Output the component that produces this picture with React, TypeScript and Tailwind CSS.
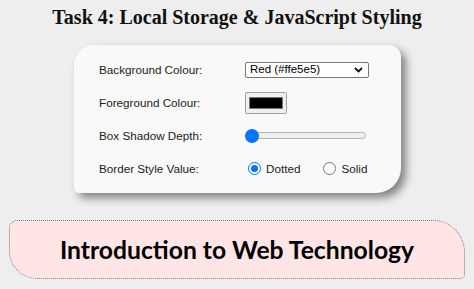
import React from "react";

export default function App() {
  return (
    <div className="w-[474px] h-[289px] bg-[#eeeeee] overflow-hidden pt-[5px]" style={{ fontFamily: '"Liberation Sans", Arial, sans-serif' }}>
      <h2 className="text-center font-bold text-[20px] leading-[24px] text-[#111]" style={{ fontFamily: '"Liberation Serif", "Times New Roman", serif' }}>
        Task 4: Local Storage &amp; JavaScript Styling
      </h2>
      <div className="mt-[16px] ml-[74px] w-[327px] h-[148px] bg-[#f9f9f9] rounded-tl-[20px] rounded-tr-[12px] rounded-br-[25px] rounded-bl-[5px] shadow-[5px_5px_9px_rgba(0,0,0,0.45)] pl-[25px] py-[8px]">
        <div className="grid grid-cols-[146px_auto] auto-rows-[33px] items-center text-[11.7px] text-[#222]">
          <div>Background Colour:</div>
          <div className="relative w-[124px] h-[16px] border border-[#767676] rounded-[2px] bg-white flex items-center pl-[4px] text-[11.5px] text-black">
            Red (#ffe5e5)
            <svg className="absolute right-[5px] top-[4px]" width="9" height="6" viewBox="0 0 9 6">
              <path d="M1 1 L4.5 4.5 L8 1" fill="none" stroke="#111" strokeWidth="1.8" />
            </svg>
          </div>
          <div>Foreground Colour:</div>
          <div className="w-[42px] h-[22px] border border-[#a0a0a0] rounded-[2px] bg-[#efefef] flex items-center justify-center">
            <div className="w-[34px] h-[12px] bg-black border border-[#777]" />
          </div>
          <div>Box Shadow Depth:</div>
          <div className="relative w-[121px] h-[14px] flex items-center">
            <div className="w-full h-[7px] rounded-full bg-[#efefef] border border-[#b5b5b5]" />
            <div className="absolute left-[0px] top-[0px] w-[14px] h-[14px] rounded-full bg-[#0075ff]" />
          </div>
          <div>Border Style Value:</div>
          <div className="flex items-center">
            <span className="w-[13px] h-[13px] rounded-full border border-[#0075ff] flex items-center justify-center ml-[3px]">
              <span className="w-[7px] h-[7px] rounded-full bg-[#0075ff]" />
            </span>
            <span className="ml-[5px]">Dotted</span>
            <span className="w-[13px] h-[13px] rounded-full border border-[#767676] bg-white ml-[23px]" />
            <span className="ml-[5px]">Solid</span>
          </div>
        </div>
      </div>
      <div className="mt-[27px] mx-[9px] h-[59px] bg-[#ffe5e5] border border-dotted border-[#777] rounded-tl-[8px] rounded-tr-[32px] rounded-br-[5px] rounded-bl-[28px] flex items-center justify-center">
        <span className="font-bold text-[24.7px] text-black" style={{ fontFamily: 'Lato, "Open Sans", sans-serif' }}>
          Introduction to Web Technology
        </span>
      </div>
    </div>
  );
}
